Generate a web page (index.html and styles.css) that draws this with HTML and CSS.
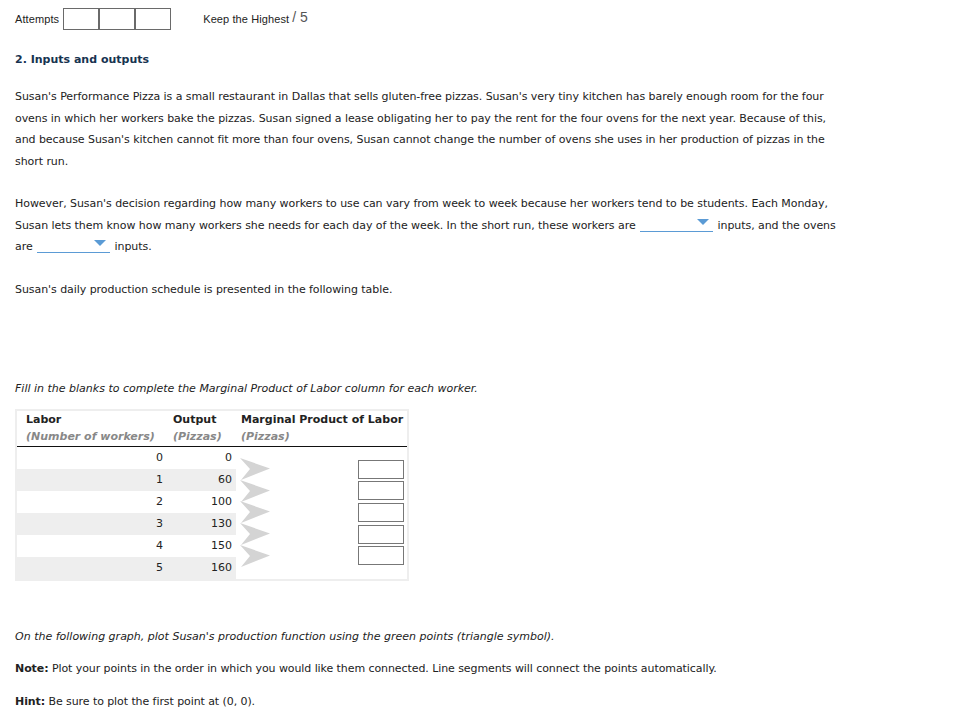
FILE: index.html
```html
<!DOCTYPE html>
<html>
<head>
<meta charset="utf-8">
<link rel="stylesheet" href="styles.css">
</head>
<body>
<div class="topbar">
  <span class="attempts-label">Attempts</span>
  <div class="attempt-boxes"><span class="abox"></span><span class="abox"></span><span class="abox"></span></div>
  <span class="keep">Keep the Highest</span><span class="outof">/ 5</span>
</div>

<h2 class="qtitle">2. Inputs and outputs</h2>

<div class="content">
<p class="para">Susan's Performance Pizza is a small restaurant in Dallas that sells gluten-free pizzas. Susan's very tiny kitchen has barely enough room for the four ovens in which her workers bake the pizzas. Susan signed a lease obligating her to pay the rent for the four ovens for the next year. Because of this, and because Susan's kitchen cannot fit more than four ovens, Susan cannot change the number of ovens she uses in her production of pizzas in the short run.</p>

<p class="para">However, Susan's decision regarding how many workers to use can vary from week to week because her workers tend to be students. Each Monday, Susan lets them know how many workers she needs for each day of the week. In the short run, these workers are <span class="dropdown"><span class="caret"></span></span> inputs, and the ovens are <span class="dropdown"><span class="caret"></span></span> inputs.</p>

<p class="para">Susan's daily production schedule is presented in the following table.</p>
</div>

<p class="instr">Fill in the blanks to complete the Marginal Product of Labor column for each worker.</p>

<table class="mpl">
  <thead>
    <tr>
      <th class="c1">Labor<br><span class="sub">(Number of workers)</span></th>
      <th class="c2">Output<br><span class="sub">(Pizzas)</span></th>
      <th class="c3">Marginal Product of Labor<br><span class="sub">(Pizzas)</span></th>
    </tr>
  </thead>
  <tbody>
    <tr>
      <td class="n1">0</td><td class="n2">0</td>
      <td class="mcol" rowspan="6">
        <div class="mlist">
          <div class="mrow"><svg class="chev" viewBox="0 0 30 22"><polygon points="0,0 30,10.5 1,22 10,11"/></svg><span class="inbox"></span></div>
          <div class="mrow"><svg class="chev" viewBox="0 0 30 22"><polygon points="0,0 30,10.5 1,22 10,11"/></svg><span class="inbox"></span></div>
          <div class="mrow"><svg class="chev" viewBox="0 0 30 22"><polygon points="0,0 30,10.5 1,22 10,11"/></svg><span class="inbox"></span></div>
          <div class="mrow"><svg class="chev" viewBox="0 0 30 22"><polygon points="0,0 30,10.5 1,22 10,11"/></svg><span class="inbox"></span></div>
          <div class="mrow"><svg class="chev" viewBox="0 0 30 22"><polygon points="0,0 30,10.5 1,22 10,11"/></svg><span class="inbox"></span></div>
        </div>
      </td>
    </tr>
    <tr class="alt"><td class="n1">1</td><td class="n2">60</td></tr>
    <tr><td class="n1">2</td><td class="n2">100</td></tr>
    <tr class="alt"><td class="n1">3</td><td class="n2">130</td></tr>
    <tr><td class="n1">4</td><td class="n2">150</td></tr>
    <tr class="alt"><td class="n1">5</td><td class="n2">160</td></tr>
  </tbody>
</table>

<p class="instr graph-instr">On the following graph, plot Susan's production function using the green points (triangle symbol).</p>
<p class="note"><b>Note:</b> Plot your points in the order in which you would like them connected. Line segments will connect the points automatically.</p>
<p class="note"><b>Hint:</b> Be sure to plot the first point at (0, 0).</p>
</body>
</html>
```

FILE: styles.css
```css
html, body {
  margin: 0;
  padding: 0;
  background: #fff;
}
body {
  padding: 8px 15px 0 15px;
  font-family: "DejaVu Sans", Verdana, sans-serif;
  font-size: 11px;
  color: #222;
}
.topbar {
  display: flex;
  align-items: center;
  height: 22px;
  font-family: "Liberation Sans", Arial, sans-serif;
  font-size: 11px;
  color: #222;
}
.attempts-label {
  margin-right: 4px;
  letter-spacing: 0.1px;
}
.attempt-boxes {
  display: flex;
}
.abox {
  width: 34px;
  height: 20px;
  border: 1px solid #6a6a6a;
}
.keep {
  margin-left: 32px;
  letter-spacing: 0.1px;
}
.outof {
  margin-left: 3px;
  font-size: 14px;
  color: #555;
  position: relative;
  top: -2px;
}
.qtitle {
  margin: 22px 0 0 0;
  font-size: 11px;
  font-weight: bold;
  color: #173350;
  line-height: 16px;
}
.content {
  width: 833px;
}
.para {
  margin: 21px 0 0 0;
  line-height: 21.5px;
  letter-spacing: -0.06px;
}
.content .para:first-child {
  margin-top: 18px;
}
.dropdown {
  display: inline-block;
  width: 73px;
  height: 13px;
  border-bottom: 1px solid #5b9bd5;
  position: relative;
  vertical-align: -3px;
  margin: 0 1px;
}
.caret {
  position: absolute;
  right: 4px;
  top: 1px;
  width: 0;
  height: 0;
  border-left: 6px solid transparent;
  border-right: 6px solid transparent;
  border-top: 6px solid #5b9bd5;
}
.instr {
  margin: 78px 0 0 0;
  font-style: italic;
  line-height: 21.5px;
}
table.mpl {
  margin-top: 9px;
  border: 2px solid #eee;
  border-collapse: collapse;
  font-size: 11px;
}
.mpl th {
  text-align: left;
  vertical-align: top;
  line-height: 17px;
  padding: 0 0 1px 0;
  border-bottom: 1px solid #111;
  color: #222;
  font-weight: bold;
}
.mpl th.c1 { padding-left: 9px; width: 142px; }
.mpl th.c2 { padding-left: 5px; width: 63px; }
.mpl th.c3 { padding-left: 5px; padding-right: 4px; }
.sub {
  font-style: italic;
  color: #888;
}
.mpl td {
  padding: 0;
  height: 22px;
  line-height: 22px;
}
.n1 {
  text-align: right;
  padding-right: 5px !important;
}
.n2 {
  text-align: right;
  padding-right: 4px !important;
}
tr.alt td.n1, tr.alt td.n2 {
  background: #eee;
}
td.mcol {
  vertical-align: top;
  background: #fff;
  padding: 12px 3px 0 4px !important;
}
.mlist {
  display: flex;
  flex-direction: column;
}
.mrow {
  display: flex;
  align-items: center;
  justify-content: space-between;
  height: 21.6px;
}
.chev {
  width: 30px;
  height: 22px;
  fill: #d4d4d4;
}
.inbox {
  display: block;
  width: 44px;
  height: 17px;
  border: 1px solid #777;
  background: #fff;
}
.graph-instr {
  margin-top: 45px;
}
.note {
  margin: 11px 0 0 0;
  line-height: 21.5px;
  letter-spacing: -0.08px;
}
```
